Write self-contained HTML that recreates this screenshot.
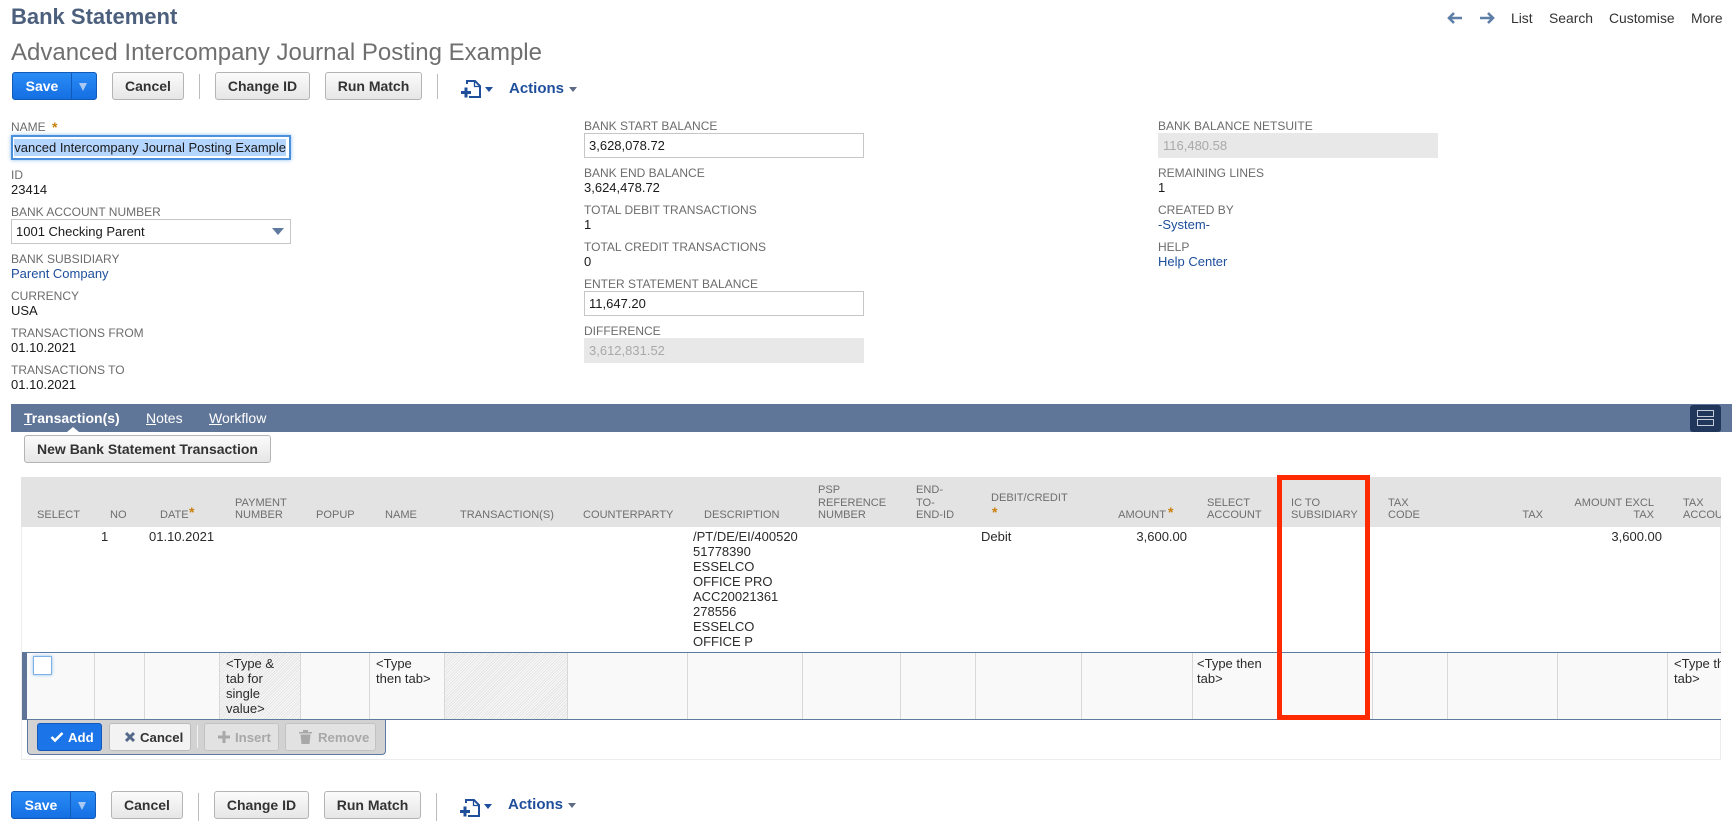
<!DOCTYPE html>
<html lang="en">
<head>
<meta charset="utf-8">
<title>Bank Statement</title>
<style>
html,body{margin:0;padding:0;background:#fff;}
body{width:1732px;height:830px;overflow:hidden;position:relative;font-family:"Liberation Sans",Arial,sans-serif;}
#clip{position:absolute;left:0;top:0;width:1721px;height:830px;overflow:hidden;}
.a{position:absolute;white-space:nowrap;}
.l{position:absolute;white-space:nowrap;font-size:12px;line-height:16px;color:#6c6c6c;margin-top:1px;}
.v{position:absolute;white-space:nowrap;font-size:13px;line-height:16px;color:#1a1a1a;margin-top:1px;}
.k{color:#1d4f9c;}
.in{position:absolute;box-sizing:border-box;background:#fff;border:1px solid #c6c6c6;font-size:13px;line-height:23px;height:25px;width:280px;padding-left:4px;color:#1a1a1a;white-space:nowrap;}
.dis{background:#e8e8e8;border-color:#e8e8e8;color:#a9a9a9;}
.btn{position:absolute;box-sizing:border-box;height:28px;border:1px solid #b4b4b4;border-radius:3px;background:linear-gradient(#fbfbfb,#e6e6e6);font-size:14px;font-weight:bold;line-height:27px;color:#333;text-align:center;white-space:nowrap;}
.save{position:absolute;box-sizing:border-box;height:28px;border:1px solid #1259b8;border-radius:3px;background:linear-gradient(#2a8cf5,#156fe3);color:#fff;font-size:14px;font-weight:bold;line-height:27px;white-space:nowrap;overflow:hidden;}
.save i{position:absolute;top:0;bottom:0;width:1px;background:#1259b8;}
.save b{position:absolute;left:0;top:0;text-align:center;}
.save u{position:absolute;top:10px;width:0;height:0;border-left:4px solid transparent;border-right:4px solid transparent;border-top:8px solid #a9c9f3;}
.dv{position:absolute;width:1px;background:#bcbcbc;}
.tab{position:absolute;top:410px;font-size:14px;line-height:16px;color:#fff;white-space:nowrap;}
.h{position:absolute;white-space:nowrap;font-size:11.05px;line-height:12.5px;color:#6e6e6e;}
.star{position:absolute;color:#c8800c;font-weight:bold;font-size:14px;line-height:14px;white-space:nowrap;}
.c{position:absolute;top:652px;height:68px;width:1px;background:#d8d8d8;}
.t{position:absolute;white-space:nowrap;font-size:13px;line-height:15px;color:#2a2a2a;}
.hatch{position:absolute;top:653px;height:66px;background:repeating-linear-gradient(135deg,#f9f9f9 0,#f9f9f9 1px,#e4e4e4 1px,#e4e4e4 2px);}
.car{position:absolute;width:0;height:0;border-left:4px solid transparent;border-right:4px solid transparent;border-top:5px solid #1d4f9c;}
.act{position:absolute;font-size:15px;font-weight:bold;line-height:18px;color:#1f4f9b;white-space:nowrap;}
.nav{position:absolute;top:10px;font-size:13.9px;line-height:16px;color:#333;white-space:nowrap;}
.ab{position:absolute;box-sizing:border-box;top:723px;height:28px;border-radius:3px;font-size:13.2px;font-weight:bold;line-height:27px;white-space:nowrap;}
</style>
</head>
<body>

<div class="a" style="left:11px;top:3px;font-size:22px;line-height:27px;font-weight:bold;color:#4c5f7c;">Bank Statement</div>
<div class="a" style="left:11px;top:38px;font-size:24px;line-height:30px;color:#6f6f6f;">Advanced Intercompany Journal Posting Example</div>

<!-- top right nav -->
<svg class="a" style="left:1447px;top:11px" width="15" height="14" viewBox="0 0 15 14"><path d="M7 2 2 7 7 12M2.500 7H15" fill="none" stroke="#5d7ea6" stroke-width="2.600"/></svg>
<svg class="a" style="left:1480px;top:11px" width="15" height="14" viewBox="0 0 15 14"><path d="M8 2 13 7 8 12M12.500 7H0" fill="none" stroke="#5d7ea6" stroke-width="2.600"/></svg>
<div class="nav" style="left:1511px;">List</div>
<div class="nav" style="left:1549px;">Search</div>
<div class="nav" style="left:1609px;">Customise</div>
<div class="nav" style="left:1691px;">More</div>

<!-- top toolbar -->
<div class="save" style="left:12px;top:72px;width:85px;"><b style="width:58px;">Save</b><i style="left:58px;"></i><u style="left:66px;"></u></div>
<div class="btn" style="left:112px;top:72px;width:72px;">Cancel</div>
<div class="dv" style="left:199px;top:74px;height:25px;"></div>
<div class="btn" style="left:215px;top:72px;width:95px;">Change ID</div>
<div class="btn" style="left:325px;top:72px;width:97px;">Run Match</div>
<div class="dv" style="left:437px;top:74px;height:25px;"></div>
<svg class="a" style="left:460px;top:79px" width="22" height="20" viewBox="0 0 22 20"><path d="M7 5V2h8l5 5v11H9" fill="none" stroke="#1f4f9b" stroke-width="2"/><path d="M14.500 2v5.500H20" fill="none" stroke="#1f4f9b" stroke-width="1.300"/><path d="M1 13.500h10M6 8.500v10" fill="none" stroke="#1f4f9b" stroke-width="3"/></svg>
<div class="car" style="left:485px;top:87px;"></div>
<div class="act" style="left:509px;top:80px;">Actions</div>
<div class="car" style="left:569px;top:87px;border-top-color:#5d6b85;"></div>

<!-- left column -->
<div class="l" style="left:11px;top:119px;margin-top:0;">NAME</div>
<div class="star" style="left:52px;top:120px;">*</div>
<div class="a" style="left:11px;top:135px;width:280px;height:25px;box-sizing:border-box;border:2px solid #4a90dc;box-shadow:0 0 4px #8dbdf0;background:#fff;overflow:hidden;">
  <div class="a" style="left:1px;top:2px;height:17px;width:272px;background:#b4d5fe;overflow:hidden;">
    <span class="a" style="right:0;top:0;line-height:17px;font-size:13px;color:#1a1a1a;">Advanced Intercompany Journal Posting Example</span>
  </div>
</div>
<div class="l" style="left:11px;top:166px;">ID</div>
<div class="v" style="left:11px;top:181px;">23414</div>
<div class="l" style="left:11px;top:203px;">BANK ACCOUNT NUMBER</div>
<div class="in" style="left:11px;top:219px;width:280px;">1001 Checking Parent</div>
<svg class="a" style="left:272px;top:228px" width="12" height="8" viewBox="0 0 12 8"><path d="M0 0h12L6 7z" fill="#5f7a9f"/></svg>
<div class="l" style="left:11px;top:250px;">BANK SUBSIDIARY</div>
<div class="v k" style="left:11px;top:265px;">Parent Company</div>
<div class="l" style="left:11px;top:287px;">CURRENCY</div>
<div class="v" style="left:11px;top:302px;">USA</div>
<div class="l" style="left:11px;top:324px;">TRANSACTIONS FROM</div>
<div class="v" style="left:11px;top:339px;">01.10.2021</div>
<div class="l" style="left:11px;top:361px;">TRANSACTIONS TO</div>
<div class="v" style="left:11px;top:376px;">01.10.2021</div>

<!-- middle column -->
<div class="l" style="left:584px;top:117px;">BANK START BALANCE</div>
<div class="in" style="left:584px;top:133px;">3,628,078.72</div>
<div class="l" style="left:584px;top:164px;">BANK END BALANCE</div>
<div class="v" style="left:584px;top:179px;">3,624,478.72</div>
<div class="l" style="left:584px;top:201px;">TOTAL DEBIT TRANSACTIONS</div>
<div class="v" style="left:584px;top:216px;">1</div>
<div class="l" style="left:584px;top:238px;">TOTAL CREDIT TRANSACTIONS</div>
<div class="v" style="left:584px;top:253px;">0</div>
<div class="l" style="left:584px;top:275px;">ENTER STATEMENT BALANCE</div>
<div class="in" style="left:584px;top:291px;">11,647.20</div>
<div class="l" style="left:584px;top:322px;">DIFFERENCE</div>
<div class="in dis" style="left:584px;top:338px;">3,612,831.52</div>

<!-- right column -->
<div class="l" style="left:1158px;top:117px;">BANK BALANCE NETSUITE</div>
<div class="in dis" style="left:1158px;top:133px;">116,480.58</div>
<div class="l" style="left:1158px;top:164px;">REMAINING LINES</div>
<div class="v" style="left:1158px;top:179px;">1</div>
<div class="l" style="left:1158px;top:201px;">CREATED BY</div>
<div class="v k" style="left:1158px;top:216px;">-System-</div>
<div class="l" style="left:1158px;top:238px;">HELP</div>
<div class="v k" style="left:1158px;top:253px;">Help Center</div>

<!-- tab bar -->
<div class="a" style="left:11px;top:404px;width:1721px;height:28px;background:#607698;"></div>
<div class="a" style="left:1690px;top:405px;width:31px;height:27px;background:#20365a;border-radius:3px;"></div>
<div class="a" style="left:1697px;top:410px;width:17px;height:7px;box-sizing:border-box;border:1px solid #c4ccd8;"></div>
<div class="a" style="left:1697px;top:419px;width:17px;height:7px;box-sizing:border-box;border:1px solid #c4ccd8;"></div>
<div class="tab" style="left:24px;font-weight:bold;"><u>T</u>ransaction(s)</div>
<div class="tab" style="left:146px;"><u>N</u>otes</div>
<div class="tab" style="left:209px;"><u>W</u>orkflow</div>
<div class="a" style="left:67px;top:427px;width:0;height:0;border-left:6px solid transparent;border-right:6px solid transparent;border-bottom:5px solid #fff;"></div>
<div class="btn" style="left:24px;top:435px;width:247px;">New Bank Statement Transaction</div>

<!-- table -->
<div class="a" style="left:21px;top:477px;width:1700px;height:283px;box-sizing:border-box;border:1px solid #ececec;border-top:0;"></div>

<div id="clip">
<div class="a" style="left:21px;top:477px;width:1700px;height:50px;background:#e3e3e3;"></div>

<div class="h" style="left:37px;top:509px;">SELECT</div>
<div class="h" style="left:110px;top:509px;">NO</div>
<div class="h" style="left:160px;top:509px;">DATE</div>
<div class="star" style="left:189px;top:505px;">*</div>
<div class="h" style="left:235px;top:496.500px;">PAYMENT<br>NUMBER</div>
<div class="h" style="left:316px;top:509px;">POPUP</div>
<div class="h" style="left:385px;top:509px;">NAME</div>
<div class="h" style="left:460px;top:509px;">TRANSACTION(S)</div>
<div class="h" style="left:583px;top:509px;">COUNTERPARTY</div>
<div class="h" style="left:704px;top:509px;">DESCRIPTION</div>
<div class="h" style="left:818px;top:484px;">PSP<br>REFERENCE<br>NUMBER</div>
<div class="h" style="left:916px;top:484px;">END-<br>TO-<br>END-ID</div>
<div class="h" style="left:991px;top:492px;">DEBIT/CREDIT</div>
<div class="star" style="left:992px;top:505px;">*</div>
<div class="h" style="right:555px;top:509px;">AMOUNT</div>
<div class="star" style="left:1168px;top:505px;">*</div>
<div class="h" style="left:1207px;top:496.500px;">SELECT<br>ACCOUNT</div>
<div class="h" style="left:1291px;top:496.500px;">IC TO<br>SUBSIDIARY</div>
<div class="h" style="left:1388px;top:496.500px;">TAX<br>CODE</div>
<div class="h" style="right:178px;top:509px;">TAX</div>
<div class="h" style="right:67px;top:496.500px;text-align:right;">AMOUNT EXCL<br>TAX</div>
<div class="h" style="left:1683px;top:496.500px;">TAX<br>ACCOUNT</div>

<!-- row 1 -->
<div class="t" style="left:101px;top:529px;">1</div>
<div class="t" style="left:149px;top:529px;">01.10.2021</div>
<div class="t" style="left:693px;top:529px;">/PT/DE/EI/400520<br>51778390<br>ESSELCO<br>OFFICE PRO<br>ACC20021361<br>278556<br>ESSELCO<br>OFFICE P</div>
<div class="t" style="left:981px;top:529px;">Debit</div>
<div class="t" style="right:534px;top:529px;">3,600.00</div>
<div class="t" style="right:59px;top:529px;">3,600.00</div>

<!-- line row -->
<div class="a" style="left:27px;top:652px;width:1694px;height:68px;background:#f9f9f9;"></div>
<div class="hatch" style="left:220px;width:81px;"></div>
<div class="hatch" style="left:445px;width:123px;"></div>
<div class="a" style="left:22px;top:652px;width:5px;height:68px;background:#5f7497;"></div>
<div class="c" style="left:94px"></div><div class="c" style="left:144px"></div><div class="c" style="left:219px"></div><div class="c" style="left:300px"></div><div class="c" style="left:369px"></div><div class="c" style="left:444px"></div><div class="c" style="left:567px"></div><div class="c" style="left:687px"></div><div class="c" style="left:802px"></div><div class="c" style="left:900px"></div><div class="c" style="left:975px"></div><div class="c" style="left:1081px"></div><div class="c" style="left:1192px"></div><div class="c" style="left:1277px"></div><div class="c" style="left:1372px"></div><div class="c" style="left:1447px"></div><div class="c" style="left:1557px"></div><div class="c" style="left:1667px"></div>
<div class="a" style="left:22px;top:652px;width:1699px;height:1px;background:#5f7a9f;"></div>
<div class="a" style="left:27px;top:719px;width:1694px;height:1px;background:#5f7a9f;"></div>
<div class="a" style="left:33px;top:656px;width:19px;height:19px;box-sizing:border-box;background:#fff;border:1px solid #7fb0e6;box-shadow:0 0 3px #8dbdf0;"></div>
<div class="t" style="left:226px;top:656px;">&lt;Type &amp;<br>tab for<br>single<br>value&gt;</div>
<div class="t" style="left:376px;top:656px;">&lt;Type<br>then tab&gt;</div>
<div class="t" style="left:1197px;top:656px;">&lt;Type then<br>tab&gt;</div>
<div class="t" style="left:1674px;top:656px;">&lt;Type then<br>tab&gt;</div>

<!-- red highlight -->
<div class="a" style="left:1277px;top:475px;width:93px;height:245px;box-sizing:border-box;border:5px solid #ff2a00;"></div>
</div>

<!-- line action bar -->
<div class="a" style="left:27px;top:720px;width:359px;height:35px;box-sizing:border-box;background:#d2d2d2;border:1px solid #5f7a9f;border-top:0;border-radius:0 0 4px 4px;"></div>
<div class="ab" style="left:37px;width:65px;background:#1b74e8;border:1px solid #1259b8;color:#fff;">
  <svg class="a" style="left:12px;top:7px" width="14" height="12" viewBox="0 0 14 12"><path d="M1.500 6 5 9.500 12.500 2" fill="none" stroke="#fff" stroke-width="2.600"/></svg>
  <span class="a" style="left:30px;top:0;">Add</span>
</div>
<div class="ab" style="left:109px;width:82px;background:#f3f3f3;border:1px solid #bbb;color:#333;">
  <svg class="a" style="left:14px;top:7px" width="12" height="12" viewBox="0 0 12 12"><path d="M2 2 10 10M10 2 2 10" fill="none" stroke="#55698a" stroke-width="3"/></svg>
  <span class="a" style="left:30px;top:0;">Cancel</span>
</div>
<div class="a" style="left:197px;top:725px;width:1px;height:23px;background:#f2f2f2;"></div>
<div class="ab" style="left:204px;width:75px;background:#e2e2e2;border:1px solid #c2c2c2;color:#a8a8a8;">
  <svg class="a" style="left:13px;top:7px" width="12" height="12" viewBox="0 0 12 12"><path d="M6 0V12M0 6H12" fill="none" stroke="#a8a8a8" stroke-width="3"/></svg>
  <span class="a" style="left:30px;top:0;">Insert</span>
</div>
<div class="ab" style="left:285px;width:91px;background:#e2e2e2;border:1px solid #c2c2c2;color:#a8a8a8;">
  <svg class="a" style="left:13px;top:6px" width="13" height="14" viewBox="0 0 13 14"><path d="M0 2h13v1.500H0zM4 0h5v2H4zM1.500 4.500h10L10.500 14h-8z" fill="#a8a8a8"/></svg>
  <span class="a" style="left:32px;top:0;">Remove</span>
</div>

<!-- bottom toolbar -->
<div class="save" style="left:11px;top:791px;width:85px;"><b style="width:58px;">Save</b><i style="left:58px;"></i><u style="left:66px;"></u></div>
<div class="btn" style="left:111px;top:791px;width:72px;">Cancel</div>
<div class="dv" style="left:198px;top:793px;height:28px;"></div>
<div class="btn" style="left:214px;top:791px;width:95px;">Change ID</div>
<div class="btn" style="left:324px;top:791px;width:97px;">Run Match</div>
<div class="dv" style="left:436px;top:793px;height:28px;"></div>
<svg class="a" style="left:459px;top:798px" width="22" height="20" viewBox="0 0 22 20"><path d="M7 5V2h8l5 5v11H9" fill="none" stroke="#1f4f9b" stroke-width="2"/><path d="M14.500 2v5.500H20" fill="none" stroke="#1f4f9b" stroke-width="1.300"/><path d="M1 13.500h10M6 8.500v10" fill="none" stroke="#1f4f9b" stroke-width="3"/></svg>
<div class="car" style="left:484px;top:804px;"></div>
<div class="act" style="left:508px;top:796px;">Actions</div>
<div class="car" style="left:568px;top:803px;border-top-color:#5d6b85;"></div>

</body>
</html>
